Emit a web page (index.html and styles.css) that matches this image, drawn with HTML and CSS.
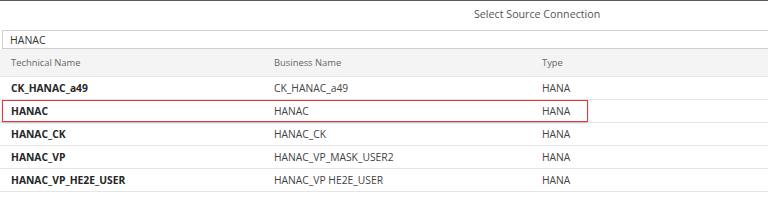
FILE: index.html
```html
<!DOCTYPE html>
<html>
<head>
<meta charset="utf-8">
<link rel="stylesheet" href="styles.css">
</head>
<body>
<div class="dialog">
  <div class="title-bar"><span class="title">Select Source Connection</span></div>
  <div class="search"><span class="search-text">HANAC</span></div>
  <div class="table">
    <div class="row head">
      <div class="c1">Technical Name</div>
      <div class="c2">Business Name</div>
      <div class="c3">Type</div>
    </div>
    <div class="row">
      <div class="c1 bold">CK_HANAC_a49</div>
      <div class="c2">CK_HANAC_a49</div>
      <div class="c3">HANA</div>
    </div>
    <div class="row selected">
      <div class="c1 bold">HANAC</div>
      <div class="c2">HANAC</div>
      <div class="c3">HANA</div>
      <div class="highlight"></div>
    </div>
    <div class="row">
      <div class="c1 bold">HANAC_CK</div>
      <div class="c2">HANAC_CK</div>
      <div class="c3">HANA</div>
    </div>
    <div class="row">
      <div class="c1 bold">HANAC_VP</div>
      <div class="c2">HANAC_VP_MASK_USER2</div>
      <div class="c3">HANA</div>
    </div>
    <div class="row">
      <div class="c1 bold">HANAC_VP_HE2E_USER</div>
      <div class="c2">HANAC_VP HE2E_USER</div>
      <div class="c3">HANA</div>
    </div>
  </div>
</div>
</body>
</html>
```
FILE: styles.css
```css
html, body {
  margin: 0;
  padding: 0;
  background: #ffffff;
}
body {
  width: 768px;
  height: 222px;
  overflow: hidden;
  font-family: "Open Sans", "Liberation Sans", sans-serif;
}
.dialog {
  border-top: 1px solid #5a5a5a;
}
.title-bar {
  height: 29px;
  box-sizing: border-box;
  padding: 0 0 3px 474px;
  display: flex;
  align-items: center;
}
.title {
  font-size: 10.7px;
  color: #555;
}
.search {
  margin-left: 2px;
  height: 19px;
  box-sizing: border-box;
  border: 1px solid #cfcfcf;
  border-right: none;
  display: flex;
  align-items: center;
  padding: 1px 0 0 7px;
}
.search-text {
  font-size: 10.5px;
  color: #333;
}
.table {
  position: relative;
}
.row {
  position: relative;
  display: grid;
  grid-template-columns: 274px 268px 1fr;
  height: 22px;
  align-items: center;
  border-bottom: 1px solid #e6e6e6;
  font-size: 10.3px;
  color: #444;
}
.row.head {
  height: 27px;
  background: #f4f4f4;
  color: #666;
  font-size: 9.4px;
  border-bottom: 1px solid #e8e8e8;
}
.c1 {
  padding-left: 11px;
}
.bold {
  font-weight: 700;
  color: #262626;
}
.highlight {
  position: absolute;
  left: 2px;
  top: 0;
  width: 584px;
  height: 20px;
  border: 1.5px solid #e2383c;
  box-shadow: 0 1px 2px rgba(0,0,0,0.2);
  pointer-events: none;
}
```
